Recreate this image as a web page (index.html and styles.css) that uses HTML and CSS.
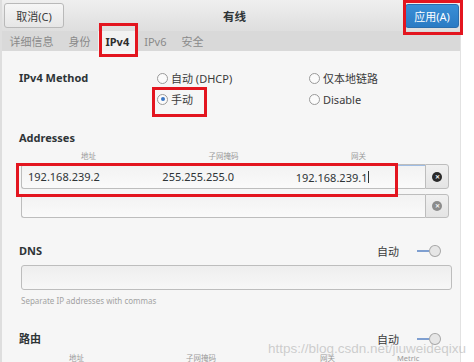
FILE: index.html
```html
<!doctype html>
<html>
	<head>
		<meta charset="utf-8">
		<link rel="stylesheet" href="styles.css">
	</head>
	<body>

		<div class="window">
			<div class="headerbar">
				<button class="btn btn-cancel">取消(C)</button>
				<div class="title">有线</div>
				<button class="btn btn-apply">应用(A)</button>
			</div>

			<div class="tabs">
				<span class="tab">详细信息</span>
				<span class="tab">身份</span>
				<span class="tab active">IPv4</span>
				<span class="tab">IPv6</span>
				<span class="tab">安全</span>
			</div>

			<div class="content">
				<div class="method">
					<div class="label">IPv4 Method</div>
					<label class="radio"><span class="dot"></span>自动 (DHCP)</label>
					<label class="radio"><span class="dot"></span>仅本地链路</label>
					<div></div>
					<label class="radio"><span class="dot checked"></span>手动</label>
					<label class="radio"><span class="dot"></span>Disable</label>
				</div>

				<div class="label section">Addresses</div>
				<div class="colheads">
					<span>地址</span>
					<span>子网掩码</span>
					<span>网关</span>
				</div>
				<div class="addr-row">
					<div class="entry">
						<span>192.168.239.2</span>
						<span>255.255.255.0</span>
						<span class="focused">192.168.239.1<i class="caret"></i></span>
					</div>
					<button class="del"><span class="x dark">&#x2715;</span></button>
				</div>
				<div class="addr-row">
					<div class="entry">
						<span></span>
						<span></span>
						<span></span>
					</div>
					<button class="del"><span class="x">&#x2715;</span></button>
				</div>

				<div class="row-head dns">
					<div class="label">DNS</div>
					<div class="auto">自动 <span class="switch"><span class="knob"></span></span></div>
				</div>
				<div class="dns-entry"></div>
				<div class="hint">Separate IP addresses with commas</div>

				<div class="row-head routes">
					<div class="label">路由</div>
					<div class="auto">自动 <span class="switch"><span class="knob"></span></span></div>
				</div>
				<div class="route-heads">
					<span>地址</span>
					<span>子网掩码</span>
					<span>网关</span>
					<span>Metric</span>
				</div>
			</div>
		</div>

		<div class="mark mark-apply"></div>
		<div class="mark mark-tab"></div>
		<div class="mark mark-manual"></div>
		<div class="mark mark-addr"></div>
		<div class="watermark">https://blog.csdn.net/jiuweideqixu</div>

	</body>
</html>
```

FILE: styles.css
```css
html, body {
	margin: 0;
	width: 474px;
	height: 362px;
	overflow: hidden;
	background: #fff;
}

body {
	position: relative;
	font-family: "Noto Sans", "Noto Sans CJK SC", sans-serif;
	font-size: 11px;
	color: #2e3436;
}

.window {
	width: 461px;
	height: 362px;
	background: #f6f6f6;
	border-left: 2px solid #dedede;
	border-right: 1px solid #e2e2e2;
	box-sizing: border-box;
	display: flex;
	flex-direction: column;
}

.headerbar {
	height: 31px;
	display: flex;
	align-items: center;
	padding: 0 1px 0 2px;
	background: linear-gradient(#efefef, #dedede);
	flex-shrink: 0;
}
	.title {
		flex: 1;
		text-align: center;
		font-weight: bold;
		font-size: 11.5px;
	}

.btn {
	font-family: inherit;
	font-size: 11px;
	height: 25px;
	border-radius: 3px;
	padding: 0;
}
.btn-cancel {
	width: 60px;
	border: 1px solid #b9b9b9;
	background: linear-gradient(#f6f6f6, #e6e6e6);
	color: #3a3a3a;
}
.btn-apply {
	width: 54px;
	height: 24px;
	border: 1px solid #2a6eae;
	background: linear-gradient(#3a8fd6, #2a7bc4);
	color: #fff;
}

.tabs {
	height: 20px;
	display: flex;
	align-items: stretch;
	background: #d9d9d9;
	padding-left: 0;
	flex-shrink: 0;
}
	.tab {
		display: flex;
		align-items: center;
		padding: 0 7.5px;
		color: #8a8a8a;
		font-size: 11px;
	}
	.tab.active {
		background: #f2f2f2;
		color: #2e2e2e;
		font-weight: bold;
	}

.content {
	padding: 0 11px 0 17px;
	flex: 1;
}

.label {
	font-weight: bold;
	font-size: 11px;
	line-height: 14px;
	color: #2e3436;
}

.method {
	display: grid;
	grid-template-columns: 138px 152px 1fr;
	grid-auto-rows: 16px;
	row-gap: 5px;
	margin-top: 19px;
	align-items: center;
}
	.radio {
		display: flex;
		align-items: center;
		gap: 3px;
		font-size: 11px;
		color: #3a3a3a;
	}
	.dot {
		width: 9px;
		height: 9px;
		border: 1px solid #9a9a9a;
		border-radius: 50%;
		background: #fbfbfb;
		display: flex;
		align-items: center;
		justify-content: center;
	}
	.dot.checked::after {
		content: "";
		width: 4px;
		height: 4px;
		border-radius: 50%;
		background: #3a76c4;
	}

.section {
	margin-top: 24px;
}

.colheads {
	display: grid;
	grid-template-columns: repeat(3, 135px);
	margin: 6px 0 0 2px;
	height: 10px;
	line-height: 10px;
	font-size: 7.5px;
	color: #9a9a9a;
	text-align: center;
}

.addr-row {
	display: flex;
	margin: 3px 0 0 2px;
	height: 25px;
}
.addr-row + .addr-row {
	margin-top: 5px;
	height: 24px;
}
	.entry {
		width: 405px;
		display: grid;
		grid-template-columns: repeat(3, 1fr);
		align-items: center;
		border: 1px solid #bdbdbd;
		border-right: none;
		border-radius: 3px 0 0 3px;
		background: linear-gradient(#f2f2f2, #fafafa);
		box-sizing: border-box;
		font-size: 11px;
		color: #2e3436;
	}
		.entry span {
			padding-left: 6px;
		}
		.entry .focused {
			display: flex;
			align-items: center;
			height: 100%;
			padding-left: 5px;
			border-top: 1px solid #9fbde4;
			box-sizing: border-box;
		}
		.caret {
			width: 1px;
			height: 12px;
			background: #2e3436;
			margin-left: 1px;
		}
	.del {
		width: 24px;
		padding: 0;
		border: 1px solid #bdbdbd;
		border-radius: 0 3px 3px 0;
		background: linear-gradient(#f0f0f0, #e4e4e4);
		display: flex;
		align-items: center;
		justify-content: center;
	}
	.x {
		width: 10px;
		height: 10px;
		border-radius: 50%;
		background: #8c8c8c;
		color: #f2f2f2;
		font-size: 6px;
		font-weight: bold;
		line-height: 10px;
		text-align: center;
	}
	.x.dark {
		background: #2a2a2a;
	}

.row-head {
	display: flex;
	align-items: center;
	justify-content: space-between;
	height: 14px;
	margin-top: 26px;
	padding-right: 8px;
}
.routes {
	margin-top: 25px;
}
	.auto {
		display: flex;
		align-items: center;
		gap: 18px;
		font-size: 11px;
		color: #3a3a3a;
	}
	.switch {
		display: flex;
		align-items: center;
		width: 24px;
		height: 12px;
	}
	.switch::before {
		content: "";
		width: 13px;
		height: 2px;
		background: #7f9fd0;
	}
	.knob {
		width: 10px;
		height: 10px;
		border-radius: 50%;
		border: 1px solid #a8a8a8;
		background: #e6e6e6;
	}

.dns-entry {
	margin: 7px 0 0 2px;
	height: 25px;
	width: 431px;
	border: 1px solid #bdbdbd;
	border-radius: 3px;
	background: linear-gradient(#eeeeee, #f7f7f7);
	box-sizing: border-box;
}

.hint {
	margin: 5px 0 0 2px;
	font-size: 8px;
	line-height: 12px;
	color: #a3a3a3;
}

.route-heads {
	display: flex;
	margin-top: 7px;
	font-size: 7.5px;
	line-height: 10px;
	color: #9a9a9a;
}
	.route-heads span:nth-child(1) { margin-left: 50px; }
	.route-heads span:nth-child(2) { margin-left: 102px; }
	.route-heads span:nth-child(3) { margin-left: 104px; }
	.route-heads span:nth-child(4) { margin-left: 62px; }

/* red annotation frames drawn over the screenshot */
.mark {
	position: absolute;
	border: 3px solid #e3151f;
	box-sizing: border-box;
}
.mark-apply { left: 403px; top: 0; width: 60px; height: 35px; }
.mark-tab { left: 99px; top: 23px; width: 39px; height: 34px; }
.mark-manual { left: 152px; top: 87px; width: 55px; height: 30px; }
.mark-addr { left: 16px; top: 163px; width: 382px; height: 34px; }

.watermark {
	position: absolute;
	left: 268px;
	top: 341px;
	font-family: "Liberation Sans", sans-serif;
	font-size: 13.5px;
	color: rgba(190, 190, 190, 0.75);
	white-space: nowrap;
}
```
